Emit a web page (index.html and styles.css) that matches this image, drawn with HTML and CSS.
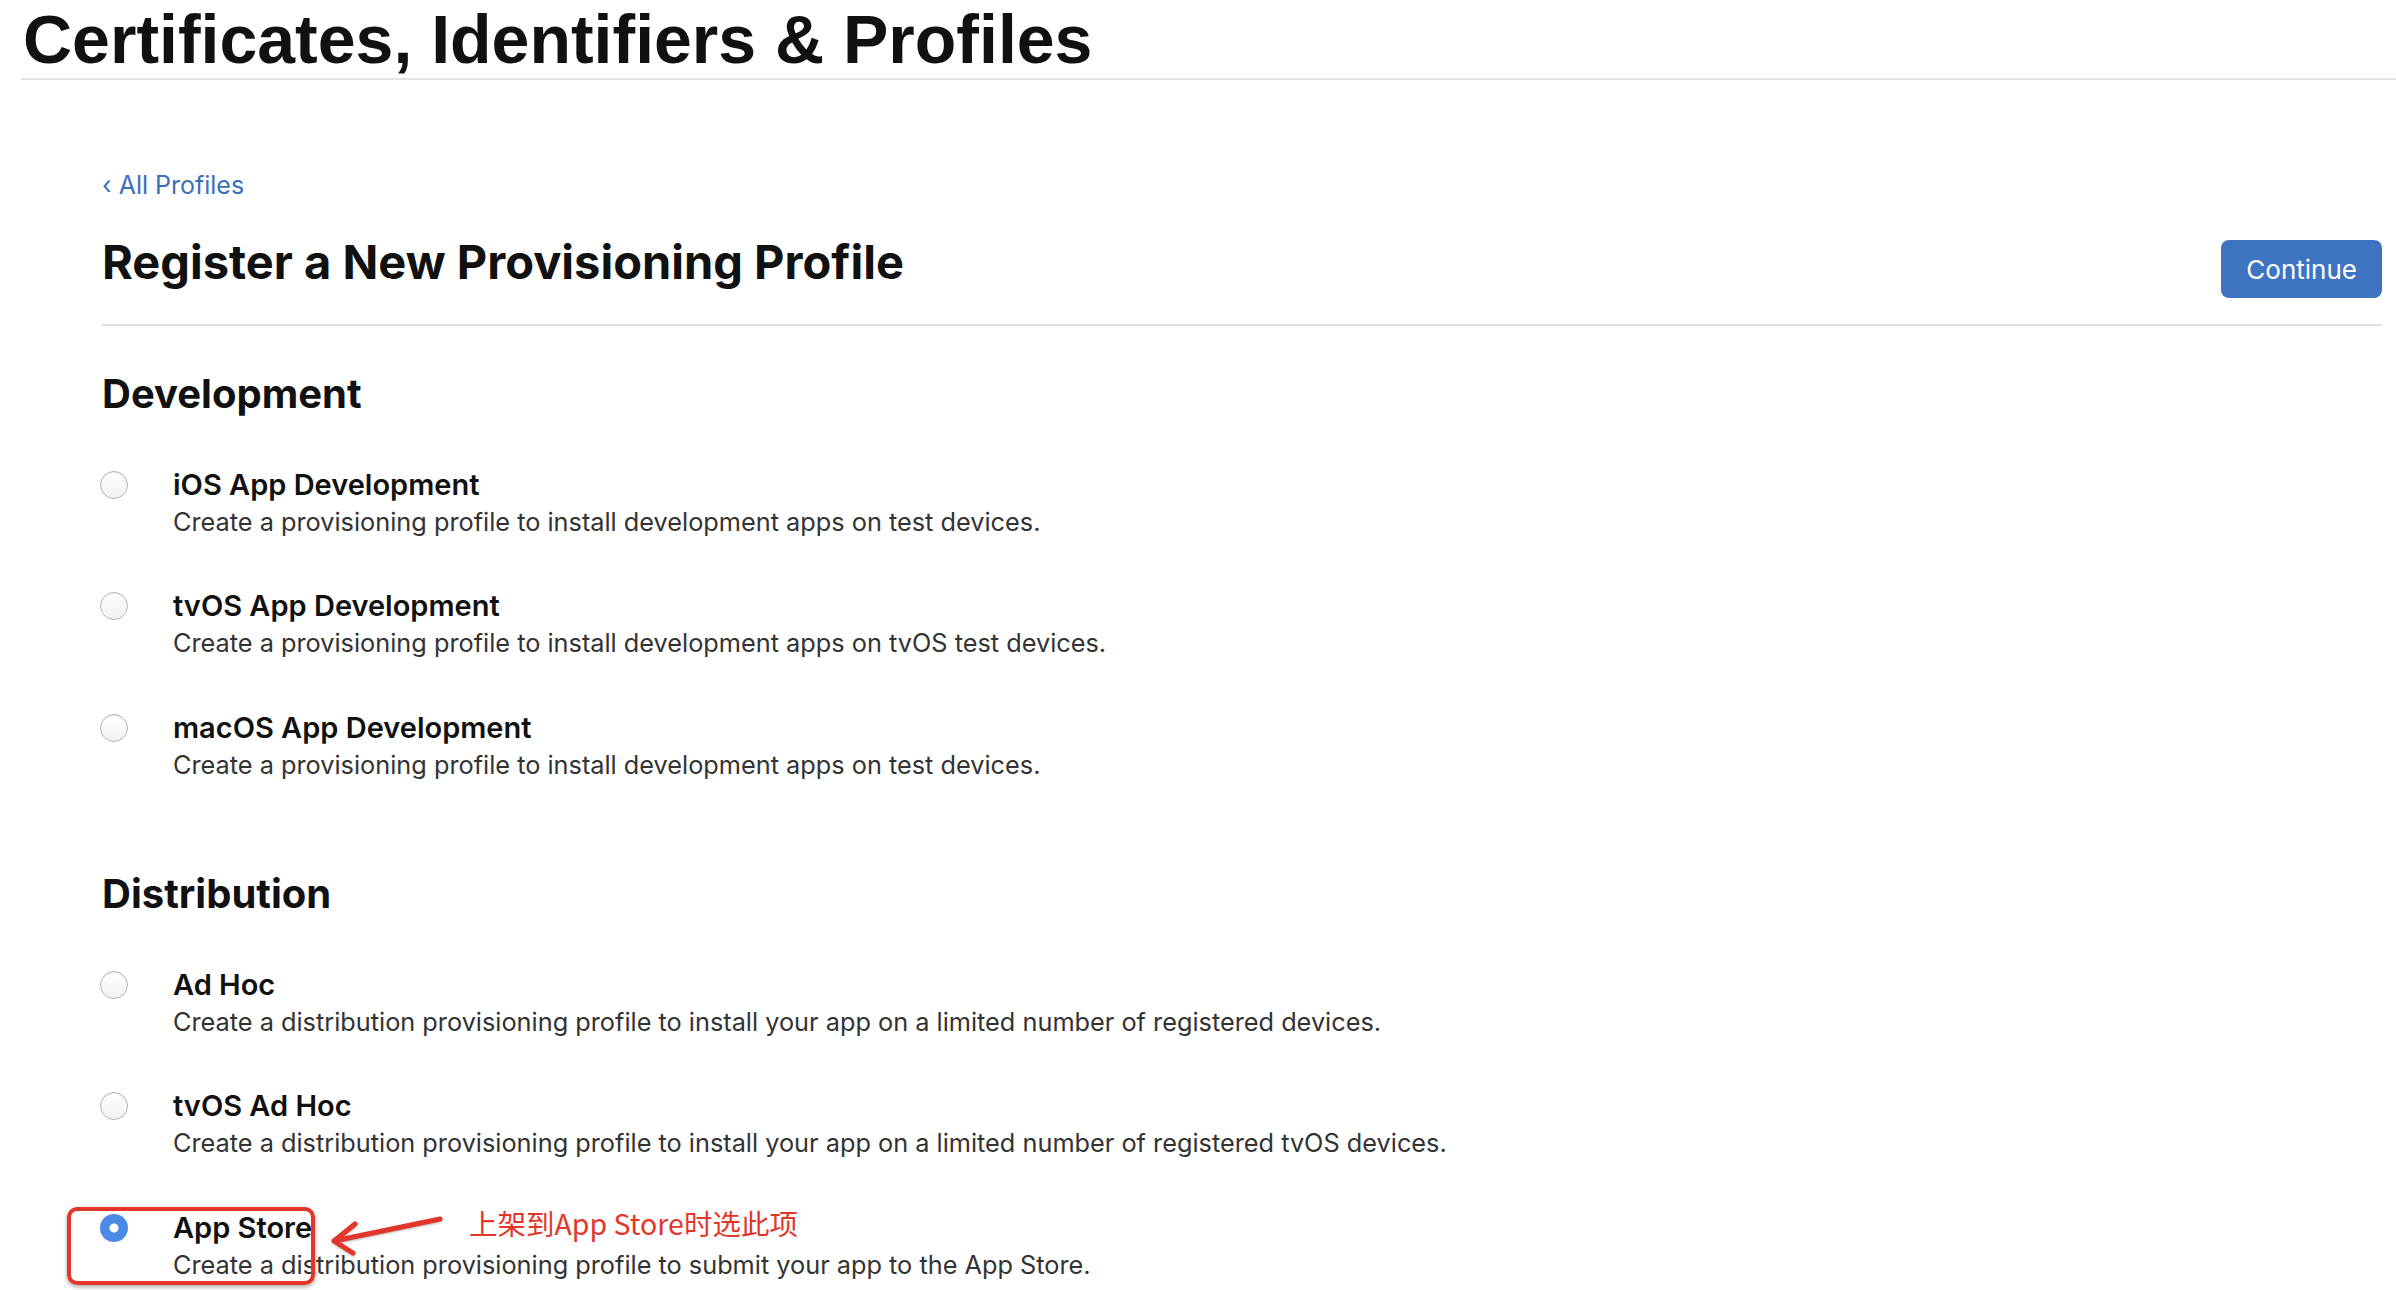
FILE: index.html
```html
<!DOCTYPE html>
<html lang="en">
<head>
    <meta charset="UTF-8">
    <meta name="viewport" content="width=device-width, initial-scale=1.0">
    <title>Register a New Provisioning Profile</title>
    <link rel="stylesheet" href="styles.css">
</head>
<body>
    <header class="page-header">
        <h1>Certificates, Identifiers &amp; Profiles</h1>
    </header>

    <main class="content">
        <a class="back-link" href="#">&lsaquo; All Profiles</a>
        <div class="title-bar">
            <h2>Register a New Provisioning Profile</h2>
            <button class="btn-continue" type="button">Continue</button>
        </div>

        <section class="group">
            <h3>Development</h3>
            <label class="option">
                <span class="radio"></span>
                <span class="option-text">
                    <span class="option-title">iOS App Development</span>
                    <span class="option-desc">Create a provisioning profile to install development apps on test devices.</span>
                </span>
            </label>
            <label class="option">
                <span class="radio"></span>
                <span class="option-text">
                    <span class="option-title">tvOS App Development</span>
                    <span class="option-desc">Create a provisioning profile to install development apps on tvOS test devices.</span>
                </span>
            </label>
            <label class="option">
                <span class="radio"></span>
                <span class="option-text">
                    <span class="option-title">macOS App Development</span>
                    <span class="option-desc">Create a provisioning profile to install development apps on test devices.</span>
                </span>
            </label>
        </section>

        <section class="group">
            <h3>Distribution</h3>
            <label class="option">
                <span class="radio"></span>
                <span class="option-text">
                    <span class="option-title">Ad Hoc</span>
                    <span class="option-desc">Create a distribution provisioning profile to install your app on a limited number of registered devices.</span>
                </span>
            </label>
            <label class="option">
                <span class="radio"></span>
                <span class="option-text">
                    <span class="option-title">tvOS Ad Hoc</span>
                    <span class="option-desc">Create a distribution provisioning profile to install your app on a limited number of registered tvOS devices.</span>
                </span>
            </label>
            <label class="option option-marked">
                <span class="radio checked"></span>
                <span class="option-text">
                    <span class="option-title">App Store</span>
                    <span class="option-desc">Create a distribution provisioning profile to submit your app to the App Store.</span>
                </span>
                <!-- annotation drawn over the screenshot -->
                <span class="mark-box"></span>
                <svg class="mark-arrow" width="125" height="56" viewBox="0 0 125 56">
                    <path d="M115 13 L9 35 M30 18 L9 35 L28 47" fill="none" stroke="#e3362b" stroke-width="5" stroke-linecap="round" stroke-linejoin="round"/>
                </svg>
                <span class="mark-note">上架到App Store时选此项</span>
            </label>
        </section>
    </main>
</body>
</html>
```

FILE: styles.css
```css
body {
    margin: 0;
    padding: 0;
    background-color: #fff;
    color: #111;
    font-family: Inter, "Noto Sans", sans-serif;
}
.page-header {
    margin-left: 21px;
    border-bottom: 2px solid #e4e4e4;
}
.page-header h1 {
    margin: 0 0 0 2px;
    font-family: "Liberation Sans", Arial, sans-serif;
    font-size: 68px;
    line-height: 78px;
    font-weight: bold;
    color: #111;
}
.content {
    padding: 89px 14px 0 102px;
}
.back-link {
    display: block;
    font-size: 25px;
    line-height: 32px;
    color: #3b6fba;
    text-decoration: none;
}
.title-bar {
    display: flex;
    justify-content: space-between;
    align-items: flex-start;
    margin-top: 34px;
    padding-bottom: 26px;
    border-bottom: 2px solid #e0e0e0;
}
.title-bar h2 {
    margin: 0;
    font-size: 47px;
    line-height: 54px;
    font-weight: 700;
    color: #111;
}
.btn-continue {
    margin-top: 5px;
    height: 58px;
    padding: 0 25px;
    border: none;
    border-radius: 8px;
    background-color: #3d73c1;
    color: #fff;
    font-family: Inter, sans-serif;
    font-size: 26px;
    cursor: pointer;
}
.group {
    margin-top: 45.5px;
}
.group + .group {
    margin-top: 88px;
}
.group h3 {
    margin: 0 0 51px 0;
    font-size: 40px;
    line-height: 44px;
    font-weight: 700;
    color: #111;
}
.option {
    position: relative;
    display: grid;
    grid-template-columns: 28px 1fr;
    column-gap: 45px;
    margin-bottom: 47.5px;
    margin-left: -2px;
}
.radio {
    width: 26px;
    height: 26px;
    margin-top: 4px;
    border: 1px solid #b5b5b5;
    border-radius: 50%;
    background: linear-gradient(#ffffff, #f1f1f1);
    box-shadow: inset 0 1px 1px rgba(0, 0, 0, 0.08);
}
.radio.checked {
    width: 28px;
    height: 28px;
    border: none;
    background: radial-gradient(circle, #fff 0 4px, #4a8ae3 5px);
    box-shadow: none;
}
.option-text {
    display: flex;
    flex-direction: column;
}
.option-title {
    font-size: 29px;
    line-height: 36px;
    font-weight: 600;
    color: #111;
}
.option-desc {
    font-size: 25.3px;
    line-height: 38px;
    color: #333;
}
.mark-box {
    position: absolute;
    left: -33px;
    top: -3px;
    width: 240px;
    height: 70px;
    border: 4px solid #e3362b;
    border-radius: 10px;
    box-shadow: 0 2px 4px rgba(0, 0, 0, 0.35);
}
.mark-arrow {
    position: absolute;
    left: 225px;
    top: -4px;
    filter: drop-shadow(0 1px 1px rgba(0, 0, 0, 0.3));
}
.mark-note {
    position: absolute;
    left: 369px;
    top: -4px;
    font-family: "Noto Sans CJK SC", sans-serif;
    font-size: 28.5px;
    line-height: 34px;
    color: #e3362b;
    white-space: nowrap;
}
```
